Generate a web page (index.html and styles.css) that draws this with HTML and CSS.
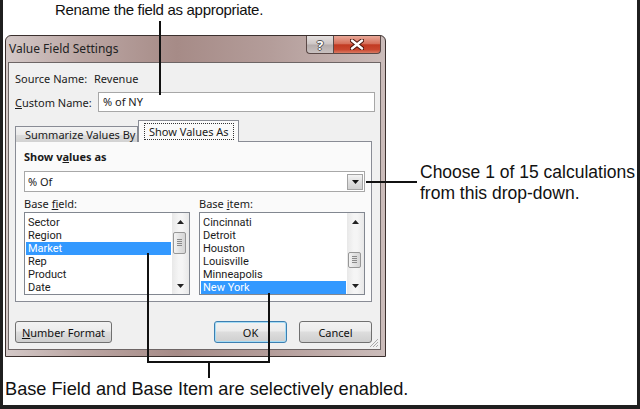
FILE: index.html
```html
<!DOCTYPE html>
<html lang="en">
<head>
    <meta charset="UTF-8">
    <meta name="viewport" content="width=device-width, initial-scale=1.0">
    <title>Value Field Settings</title>
    <link rel="stylesheet" href="styles.css">
</head>
<body>
<div class="page">
    <div class="top-note">Rename the field as appropriate.</div>

    <div class="main">
        <div class="dialog">
            <div class="titlebar">
                <span class="title">Value Field Settings</span>
                <div class="caption-btns">
                    <span class="cap-btn help">?</span>
                    <span class="cap-btn close">
                        <svg width="14" height="11" viewBox="0 0 14 11">
                            <path d="M2 1.5 L12 9.5 M12 1.5 L2 9.5" stroke="#4a1208" stroke-width="4.4" stroke-linecap="round"/>
                            <path d="M2 1.5 L12 9.5 M12 1.5 L2 9.5" stroke="#fff" stroke-width="2.4" stroke-linecap="round"/>
                        </svg>
                    </span>
                </div>
            </div>

            <div class="client">
                <div class="row source">
                    <span class="lbl">Source Name:</span>
                    <span class="val">Revenue</span>
                </div>
                <div class="row custom">
                    <label class="lbl"><u>C</u>ustom Name:</label>
                    <div class="textbox">% of NY</div>
                </div>

                <div class="tabs">
                    <div class="tab">Summarize Values By</div>
                    <div class="tab active"><span class="focus">Show Values As</span></div>
                </div>
                <div class="panel">
                    <div class="group-title">Show v<u>a</u>lues as</div>
                    <div class="combo">
                        <span>% Of</span>
                        <span class="combo-btn">
                            <svg width="7" height="4" viewBox="0 0 7 4"><path d="M0 0 H7 L3.5 4 Z" fill="#111"/></svg>
                        </span>
                    </div>
                    <div class="lists">
                        <div class="list-col">
                            <div class="list-lbl">Base <u>f</u>ield:</div>
                            <div class="listbox">
                                <ul class="items">
                                    <li>Sector</li>
                                    <li>Region</li>
                                    <li class="selected">Market</li>
                                    <li>Rep</li>
                                    <li>Product</li>
                                    <li>Date</li>
                                </ul>
                                <div class="vscroll">
                                    <span class="arrow"><svg width="7" height="4" viewBox="0 0 7 4"><path d="M0 4 H7 L3.5 0 Z" fill="#222"/></svg></span>
                                    <div class="track"><span class="thumb field-thumb"></span></div>
                                    <span class="arrow"><svg width="7" height="4" viewBox="0 0 7 4"><path d="M0 0 H7 L3.5 4 Z" fill="#222"/></svg></span>
                                </div>
                            </div>
                        </div>
                        <div class="list-col">
                            <div class="list-lbl">Base <u>i</u>tem:</div>
                            <div class="listbox">
                                <ul class="items">
                                    <li>Cincinnati</li>
                                    <li>Detroit</li>
                                    <li>Houston</li>
                                    <li>Louisville</li>
                                    <li>Minneapolis</li>
                                    <li class="selected">New York</li>
                                </ul>
                                <div class="vscroll">
                                    <span class="arrow"><svg width="7" height="4" viewBox="0 0 7 4"><path d="M0 4 H7 L3.5 0 Z" fill="#222"/></svg></span>
                                    <div class="track"><span class="thumb item-thumb"></span></div>
                                    <span class="arrow"><svg width="7" height="4" viewBox="0 0 7 4"><path d="M0 0 H7 L3.5 4 Z" fill="#222"/></svg></span>
                                </div>
                            </div>
                        </div>
                    </div>
                </div>

                <div class="buttons">
                    <button class="btn number-format"><u>N</u>umber Format</button>
                    <button class="btn ok default">OK</button>
                    <button class="btn cancel">Cancel</button>
                </div>

                <svg class="grip" width="11" height="11" viewBox="0 0 11 11">
                    <path d="M10 2 L2 10 M10 5 L5 10 M10 8 L8 10" stroke="#a9a9a9" stroke-width="1"/>
                </svg>
            </div>
        </div>

        <div class="side-note">Choose 1 of 15 calculations<br>from this drop-down.</div>
    </div>

    <div class="bottom-note">Base Field and Base Item are selectively enabled.</div>

    <!-- callout lines drawn over the dialog -->
    <div class="line top-leader"></div>
    <div class="line right-leader"></div>
    <div class="bracket"></div>
    <div class="line bracket-end"></div>
    <div class="line stem"></div>
</div>
</body>
</html>
```

FILE: styles.css
```css
body {
    margin: 0;
}
.page {
    position: relative;
    width: 640px;
    height: 409px;
    box-sizing: border-box;
    border-left: 3px solid #1f1f1f;
    border-right: 3px solid #1f1f1f;
    border-bottom: 4px solid #1f1f1f;
    background: #fff;
    overflow: hidden;
    font-family: "Liberation Sans", Arial, sans-serif;
    color: #111;
}
.top-note {
    height: 35px;
    padding-left: 52px;
    font-size: 15px;
    line-height: 20px;
    letter-spacing: -0.3px;
}
.main {
    display: flex;
    align-items: flex-start;
}
.side-note {
    margin: 127px 0 0 34px;
    font-size: 17.5px;
    line-height: 21px;
    white-space: nowrap;
}
.bottom-note {
    margin-top: 22px;
    padding-left: 2px;
    font-size: 18.2px;
    line-height: 21px;
    white-space: nowrap;
}

/* dialog window */
.dialog {
    margin-left: 2px;
    width: 381px;
    height: 322px;
    box-sizing: border-box;
    border: 1px solid #3b302e;
    border-radius: 6px 6px 0 0;
    background: linear-gradient(to right, #d3c8c7 0%, #bba6a3 20%, #a68b87 45%, #b49d9a 70%, #cbbcba 100%);
    padding: 0 4px 6px 2px;
    display: flex;
    flex-direction: column;
    font-family: "Noto Sans", "Open Sans", sans-serif;
    font-size: 11px;
    color: #1b1b1b;
}
.titlebar {
    height: 26px;
    display: flex;
    align-items: flex-start;
}
.title {
    padding-left: 1px;
    line-height: 26px;
    font-size: 12px;
    color: #222;
}
.caption-btns {
    margin-left: auto;
    display: flex;
}
.cap-btn {
    height: 18px;
    box-sizing: border-box;
    border: 1px solid #5b4947;
    border-top: none;
    display: flex;
    align-items: center;
    justify-content: center;
}
.help {
    width: 27px;
    border-right: none;
    border-radius: 0 0 0 4px;
    background: linear-gradient(#e4e0df, #cdc6c5 48%, #b5acab 52%, #c9c1c0);
    color: #fff;
    font-weight: bold;
    font-size: 13px;
    text-shadow: -1px 0 #555, 1px 0 #555, 0 -1px #555, 0 1px #555;
}
.close {
    width: 48px;
    border-radius: 0 0 4px 0;
    background: linear-gradient(#e9a898, #d6705b 45%, #c23a22 52%, #c9462e 80%, #d97a63);
}

.client {
    flex: 1;
    position: relative;
    background: #f0f0f0;
    border: 1px solid #6d6565;
    padding-left: 6px;
}
.row {
    display: flex;
    align-items: center;
}
.source {
    margin-top: 8px;
    height: 14px;
}
.source .lbl {
    width: 79px;
}
.custom {
    margin-top: 7px;
    height: 20px;
}
.custom .lbl {
    width: 83px;
}
.textbox {
    width: 277px;
    height: 20px;
    box-sizing: border-box;
    border: 1px solid #a7a7a7;
    background: #fff;
    padding-left: 4px;
    line-height: 18px;
}

.tabs {
    position: relative;
    z-index: 1;
    display: flex;
    align-items: flex-end;
    height: 21px;
    margin: 9px 0 -1px;
}
.tab {
    width: 123px;
    height: 16px;
    box-sizing: border-box;
    border: 1px solid #898c95;
    border-bottom: none;
    padding-left: 9px;
    line-height: 15px;
    background: linear-gradient(#f3f3f3, #ebebeb 50%, #dddddd 50%, #d2d2d2);
}
.tab.active {
    width: 101px;
    height: 22px;
    padding: 2px 0 0 5px;
    background: #fafafa;
}
.focus {
    display: inline-block;
    border: 1px dotted #333;
    padding: 0 4px;
    line-height: 15px;
}
.panel {
    height: 161px;
    box-sizing: border-box;
    margin-right: 8px;
    border: 1px solid #898c95;
    background: #fafafa;
    padding: 0 6px 0 8px;
}
.group-title {
    margin-top: 8px;
    line-height: 14px;
    font-weight: bold;
}
.combo {
    margin-top: 7px;
    height: 21px;
    box-sizing: border-box;
    border: 1px solid #a8a8a8;
    background: #fff;
    display: flex;
    align-items: center;
    padding-left: 3px;
}
.combo-btn {
    margin-left: auto;
    margin-right: 1px;
    width: 16px;
    height: 16px;
    box-sizing: border-box;
    border: 1px solid #a3a3a3;
    background: linear-gradient(#f4f4f4, #dedede 50%, #d0d0d0);
    display: flex;
    align-items: center;
    justify-content: center;
}
.lists {
    display: flex;
    gap: 9px;
    margin-top: 5px;
}
.list-col {
    width: 166px;
}
.list-lbl {
    height: 14px;
    line-height: 14px;
}
.listbox {
    margin-top: 1px;
    height: 83px;
    box-sizing: border-box;
    border: 1px solid #828790;
    background: #fff;
    display: flex;
}
.items {
    flex: 1;
    list-style: none;
    margin: 0;
    padding: 3px 1px 0;
    overflow: hidden;
    font-family: Roboto, "Noto Sans", sans-serif;
    font-size: 11px;
}
.items li {
    height: 13px;
    line-height: 13px;
    padding-left: 2px;
    white-space: nowrap;
}
.items li.selected {
    background: #3399ff;
    color: #fff;
}
.vscroll {
    width: 17px;
    display: flex;
    flex-direction: column;
    background: linear-gradient(to right, #e8e8e8, #f5f5f5 40%, #f5f5f5 60%, #e8e8e8);
}
.arrow {
    height: 17px;
    display: flex;
    align-items: center;
    justify-content: center;
}
.track {
    flex: 1;
    position: relative;
}
.thumb {
    position: absolute;
    left: 1px;
    width: 13px;
    box-sizing: border-box;
    border: 1px solid #979797;
    border-radius: 2px;
    background: linear-gradient(to right, #f3f3f3, #e2e2e2 50%, #d5d5d5);
}
.thumb::after {
    content: "";
    position: absolute;
    left: 3px;
    right: 3px;
    top: 50%;
    height: 7px;
    margin-top: -4px;
    background: repeating-linear-gradient(#8a8a8a 0 1px, transparent 1px 2px);
}
.field-thumb {
    top: 2px;
    height: 22px;
}
.item-thumb {
    top: 22px;
    height: 16px;
}

.buttons {
    display: flex;
    margin-top: 19px;
    padding-right: 8px;
}
.btn {
    height: 22px;
    box-sizing: border-box;
    border: 1px solid #707070;
    border-radius: 3px;
    background: linear-gradient(#f2f2f2, #ebebeb 45%, #dddddd 50%, #cfcfcf);
    font: inherit;
    color: #111;
    padding: 0;
}
.number-format {
    width: 97px;
}
.ok {
    width: 73px;
    margin-left: auto;
}
.cancel {
    width: 73px;
    margin-left: 12px;
}
.btn.default {
    border-color: #3c7fb1;
    box-shadow: inset 0 0 0 1px #a6dcf5;
}
.grip {
    position: absolute;
    right: 1px;
    bottom: 1px;
}

/* callout lines */
.line,
.bracket {
    position: absolute;
}
.line {
    background: #111;
}
.top-leader {
    left: 156px;
    top: 21px;
    width: 2px;
    height: 74px;
}
.right-leader {
    left: 363px;
    top: 181px;
    width: 51px;
    height: 2px;
}
.bracket {
    left: 144px;
    top: 253px;
    width: 121px;
    height: 108px;
    border-left: 2px solid #111;
    border-bottom: 2px solid #111;
}
.bracket-end {
    left: 265px;
    top: 293px;
    width: 2px;
    height: 70px;
}
.stem {
    left: 205px;
    top: 363px;
    width: 2px;
    height: 15px;
}
```
